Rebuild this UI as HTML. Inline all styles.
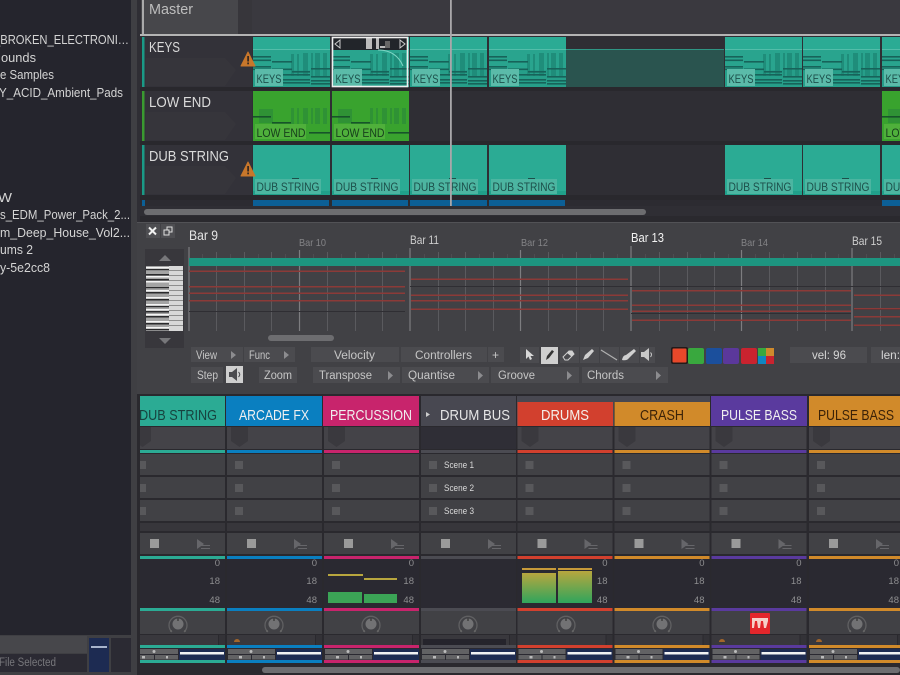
<!DOCTYPE html>
<html><head><meta charset="utf-8"><style>
html,body{margin:0;padding:0;background:#2b2a30;width:900px;height:675px;overflow:hidden}
svg{display:block;font-family:"Liberation Sans",sans-serif;filter:blur(0.35px)}
</style></head><body>
<svg xmlns="http://www.w3.org/2000/svg" width="900" height="675" viewBox="0 0 900 675">
<defs>
<clipPath id="firstcol"><rect x="140" y="394" width="85" height="270"/></clipPath>
<linearGradient id="mg" x1="0" y1="0" x2="0" y2="1"><stop offset="0" stop-color="#b8a63e"/><stop offset="1" stop-color="#2fa55c"/></linearGradient>
<g id="keys">
<rect width="77" height="50" fill="#2bab94"/>
<rect y="12" width="77" height="38" fill="#29a48e"/>
<rect y="12" width="77" height="1" fill="#53bda9"/>
<g fill="#1f8d7a"><rect x="38" y="17" width="3" height="22"/><rect x="44" y="17" width="2" height="22"/><rect x="50" y="16" width="5" height="23"/><rect x="58" y="16" width="2" height="23"/><rect x="62" y="16" width="5" height="23"/><rect x="70" y="16" width="4" height="23"/><rect x="0" y="33" width="77" height="17" opacity=".25"/></g>
<g fill="#17635a"><rect y="19" width="18" height="1.6"/><rect y="22.500" width="18" height="1.6"/><rect y="29" width="18" height="1.6"/><rect y="31.500" width="18" height="1.6"/><rect x="19" y="24" width="20" height="1.6"/><rect x="19" y="31.500" width="20" height="1.6"/><rect x="58" y="31" width="19" height="1.6"/><rect x="39" y="34" width="18" height="1.6"/><rect x="30" y="37" width="27" height="1.6"/><rect x="30" y="42" width="27" height="1.6"/><rect x="30" y="45" width="27" height="1.6"/><rect x="58" y="39" width="19" height="1.6"/><rect x="58" y="43" width="19" height="1.6"/><rect x="58" y="46" width="19" height="1.6"/></g>
<rect x="2" y="32" width="28" height="17" fill="#5bbba9"/>
<text x="3.500" y="46" font-size="12" fill="#1c4f4a" textLength="25" lengthAdjust="spacingAndGlyphs">KEYS</text>
</g>
<g id="low">
<rect width="77" height="50" fill="#39a32e"/>
<g fill="#2f9235"><rect x="38" y="17" width="3" height="16"/><rect x="44" y="17" width="2" height="16"/><rect x="50" y="17" width="5" height="16"/><rect x="58" y="17" width="2" height="16"/><rect x="62" y="17" width="5" height="16"/><rect x="70" y="17" width="4" height="16"/><rect x="6" y="18" width="14" height="14"/></g>
<g fill="#17542a"><rect y="25" width="18" height="1.6"/><rect x="19" y="31" width="19" height="1.6"/><rect x="56" y="41" width="21" height="1.6"/></g>
<rect x="2" y="33" width="51" height="15" fill="#4fb03b"/>
<text x="3.500" y="46" font-size="12" fill="#17401c" textLength="49" lengthAdjust="spacingAndGlyphs">LOW END</text>
</g>
<g id="dub">
<rect width="77" height="50" fill="#2bab94"/>
<rect y="46" width="77" height="4" fill="#20a08a"/>
<rect x="2" y="34" width="66" height="15" fill="#4cb5a1"/>
<rect x="39" y="33" width="7" height="1" fill="#1c4f4a"/>
<text x="3.500" y="46" font-size="12" fill="#1c4f4a" textLength="63" lengthAdjust="spacingAndGlyphs">DUB STRING</text>
</g>
<g id="warn"><path d="M7 0 L14 14 H0Z" fill="#c8772b" stroke="#c8772b" stroke-linejoin="round"/><rect x="6.200" y="4" width="1.800" height="5.500" fill="#3a2a20"/><rect x="6.200" y="10.500" width="1.800" height="1.800" fill="#3a2a20"/></g>
<g id="col">
<rect y="427" width="95" height="22" fill="#444348"/>
<path d="M4 427 H21 V441 L12.500 447 L4 441Z" fill="#3a393e"/>
<rect y="450" width="95" height="3" fill="currentColor"/>
<rect y="454" width="95" height="21" fill="#414145"/><rect y="477" width="95" height="21" fill="#414145"/><rect y="500" width="95" height="21" fill="#414145"/>
<rect x="8" y="461" width="8" height="8" fill="#58585b"/><rect x="8" y="484" width="8" height="8" fill="#58585b"/><rect x="8" y="507" width="8" height="8" fill="#58585b"/>
<rect y="523" width="95" height="8" fill="#37363b"/>
<rect y="533" width="95" height="21" fill="#414145"/>
<rect x="20" y="539" width="9" height="9" fill="#9a9a9a"/>
<path d="M67 539 L74 544 L67 549Z" fill="#66666a"/><rect x="71" y="545" width="9" height="1" fill="#66666a"/><rect x="71" y="548" width="9" height="1" fill="#66666a"/>
<rect y="556" width="95" height="3" fill="currentColor"/>
<rect y="559" width="95" height="49" fill="#2a2931"/>
<rect y="608" width="95" height="3" fill="currentColor"/>
<rect y="611" width="95" height="23" fill="#414145"/>
<rect y="635" width="88" height="10" fill="#39383d"/><rect x="89" y="635" width="6" height="10" fill="#333237"/>
<rect y="645" width="95" height="3" fill="currentColor"/>
<rect y="648" width="95" height="12" fill="#2a2931"/>
<rect x="1" y="649" width="47" height="5" fill="#626264"/><circle cx="24" cy="651.500" r="1.500" fill="#bbb"/>
<rect x="1" y="655" width="23" height="4.500" fill="#626264"/><rect x="25" y="655" width="23" height="4.500" fill="#626264"/>
<rect x="12" y="656" width="3" height="2.500" fill="#bbb"/><rect x="36" y="656" width="2" height="2.500" fill="#bbb"/>
<rect x="49" y="649" width="46" height="11" fill="#1e2c52"/><rect x="50" y="652" width="44" height="2.500" fill="#f2f2f2"/>
<rect y="660" width="95" height="3" fill="currentColor"/>
</g>
<g id="knob"><path d="M-6 8 A9 9 0 1 1 6 8" fill="none" stroke="#606062" stroke-width="1.300"/><circle r="5.500" fill="#727274"/><rect x="-0.600" y="-5.500" width="1.200" height="2.500" fill="#333"/><circle cx="-7" cy="7" r="1" fill="#666"/><circle cx="7" cy="7" r="1" fill="#666"/></g>
<g id="nums" font-size="9.500" fill="#8e8e90" text-anchor="end"><text x="90" y="566">0</text><text x="90" y="584">18</text><text x="90" y="603">48</text></g>
</defs>

<rect width="900" height="675" fill="#2f2e34"/>

<!-- left panel -->
<rect width="131" height="635" fill="#25252d"/>
<rect x="131" width="6" height="675" fill="#3f3f43"/>
<g font-size="13" fill="#d4d4d4">
<text x="-6" y="44" textLength="135" lengthAdjust="spacingAndGlyphs">_BROKEN_ELECTRONI…</text>
<text x="1" y="62" textLength="35" lengthAdjust="spacingAndGlyphs">ounds</text>
<text x="0" y="79" textLength="54" lengthAdjust="spacingAndGlyphs">e Samples</text>
<text x="-1" y="97" textLength="124" lengthAdjust="spacingAndGlyphs">Y_ACID_Ambient_Pads</text>
<text x="-2" y="202" textLength="14" lengthAdjust="spacingAndGlyphs">W</text>
<text x="0" y="219" textLength="130" lengthAdjust="spacingAndGlyphs">s_EDM_Power_Pack_2...</text>
<text x="0" y="237" textLength="130" lengthAdjust="spacingAndGlyphs">m_Deep_House_Vol2...</text>
<text x="0" y="254" textLength="33" lengthAdjust="spacingAndGlyphs">ums 2</text>
<text x="0" y="272" textLength="50" lengthAdjust="spacingAndGlyphs">y-5e2cc8</text>
</g>
<rect y="635" width="131" height="40" fill="#3f3f43"/>
<rect y="636" width="87" height="17" fill="#47474b"/>
<rect y="654" width="87" height="18" fill="#2b2a33"/>
<text x="-1" y="666" font-size="11.500" fill="#77777b" textLength="57" lengthAdjust="spacingAndGlyphs">File Selected</text>
<rect x="89" y="638" width="20" height="34" fill="#1d2b52"/><rect x="91" y="646" width="16" height="2" fill="#a8b4cc"/>
<rect x="111" y="638" width="20" height="34" fill="#2b2a33"/>

<!-- arrange -->
<rect x="252" width="648" height="34" fill="#3a393f"/>
<rect x="141" width="97" height="34" fill="#47474b"/>
<rect x="238" width="14" height="34" fill="#37363b"/>
<rect x="142" width="2" height="34" fill="#aaa"/>
<rect x="140" y="34" width="760" height="2" fill="#b4b4b4"/>
<g fill="#333239">
<rect x="144" y="37" width="108" height="50"/><rect x="144" y="91" width="108" height="50"/><rect x="144" y="145" width="108" height="50"/>
</g>
<g fill="#36353b"><path d="M146 58 H225 L236 70 L225 86 H146Z"/><path d="M146 112 H225 L236 124 L225 140 H146Z"/><path d="M146 166 H225 L236 178 L225 194 H146Z"/></g>
<rect x="142" y="37" width="2.500" height="50" fill="#1a9a86"/><rect x="142" y="91" width="2.500" height="50" fill="#3a9a30"/><rect x="142" y="145" width="2.500" height="50" fill="#1a9a86"/>
<rect x="140" y="87" width="760" height="4" fill="#29282d"/><rect x="140" y="141" width="760" height="4" fill="#29282d"/><rect x="140" y="195" width="760" height="5" fill="#29282d"/>
<rect x="140" y="200" width="760" height="6" fill="#2c2b31"/>
<rect x="142" y="200" width="3" height="6" fill="#0c5f96"/>
<g font-size="14.500" fill="#dadada">
<text x="149" y="14" fill="#bdbdbd" textLength="44" lengthAdjust="spacingAndGlyphs">Master</text>
<text x="149" y="52" textLength="31" lengthAdjust="spacingAndGlyphs">KEYS</text>
<text x="149" y="107" textLength="62" lengthAdjust="spacingAndGlyphs">LOW END</text>
<text x="149" y="161" textLength="80" lengthAdjust="spacingAndGlyphs">DUB STRING</text>
</g>
<use href="#keys" x="253" y="37"/><use href="#keys" x="332" y="37"/><use href="#keys" x="410" y="37"/><use href="#keys" x="489" y="37"/><use href="#keys" x="725" y="37"/><use href="#keys" x="803" y="37"/><use href="#keys" x="882" y="37"/>
<rect x="566" y="49" width="158" height="38" fill="#2a544f"/><rect x="566" y="49" width="158" height="1" fill="#2f9584"/>
<use href="#low" x="253" y="91"/><use href="#low" x="332" y="91"/><use href="#low" x="882" y="91"/>
<use href="#dub" x="253" y="145"/><use href="#dub" x="332" y="145"/><use href="#dub" x="410" y="145"/><use href="#dub" x="489" y="145"/><use href="#dub" x="725" y="145"/><use href="#dub" x="803" y="145"/><use href="#dub" x="882" y="145"/>
<g fill="#0c5f96"><rect x="253" y="200" width="76" height="6"/><rect x="332" y="200" width="76" height="6"/><rect x="410" y="200" width="77" height="6"/><rect x="489" y="200" width="76" height="6"/><rect x="882" y="200" width="18" height="6"/></g>
<!-- selected clip -->
<rect x="333" y="38" width="74" height="12" fill="#22252a"/>
<rect x="366" y="38" width="6" height="11" fill="#bbb"/><rect x="376" y="38" width="3" height="11" fill="#bbb"/><rect x="380" y="46" width="6" height="2" fill="#bbb"/><rect x="385" y="41" width="5" height="7" fill="#666"/>
<path d="M340 40 L335 44 L340 48Z M400 40 L405 44 L400 48Z" fill="none" stroke="#ccc"/>
<path d="M378 50 Q396 50 403 66" fill="none" stroke="#7fd6c5" stroke-width="1"/>
<rect x="332.500" y="37.500" width="75" height="49" fill="none" stroke="#eee" stroke-width="1.600"/>
<use href="#warn" x="241" y="52"/><use href="#warn" x="241" y="162"/>
<rect x="450" y="0" width="1.800" height="206" fill="#a9a7aa"/>
<rect x="144" y="209" width="502" height="6" rx="3" fill="#6d6d70"/>
<rect x="140" y="216" width="760" height="6" fill="#2a292e"/>

<!-- editor -->
<rect x="137" y="222" width="763" height="172" fill="#414145"/>
<rect x="137" y="222" width="763" height="1" fill="#525256"/>
<rect x="146" y="224" width="14" height="14" fill="#4e4e52"/><path d="M149 227.500 L156 234.500 M156 227.500 L149 234.500" stroke="#f0f0f0" stroke-width="2"/>
<rect x="161" y="224" width="14" height="14" fill="#4e4e52"/><rect x="167" y="227" width="5" height="5" fill="none" stroke="#e0e0e0"/><rect x="164" y="230" width="5" height="5" fill="#4e4e52" stroke="#e0e0e0"/>
<g fill="#e6e6e6">
<text x="189" y="240" font-size="14" textLength="29" lengthAdjust="spacingAndGlyphs">Bar 9</text>
<text x="299" y="246" font-size="10.500" fill="#848487" textLength="27" lengthAdjust="spacingAndGlyphs">Bar 10</text>
<text x="410" y="244" font-size="12" fill="#cfcfcf" textLength="29" lengthAdjust="spacingAndGlyphs">Bar 11</text>
<text x="521" y="246" font-size="10.500" fill="#848487" textLength="27" lengthAdjust="spacingAndGlyphs">Bar 12</text>
<text x="631" y="242" font-size="13" fill="#f2f2f2" textLength="33" lengthAdjust="spacingAndGlyphs">Bar 13</text>
<text x="741" y="246" font-size="10.500" fill="#848487" textLength="27" lengthAdjust="spacingAndGlyphs">Bar 14</text>
<text x="852" y="245" font-size="12" fill="#cfcfcf" textLength="30" lengthAdjust="spacingAndGlyphs">Bar 15</text>
</g>
<!-- grid -->
<g stroke="#5a5a5e" stroke-width="1">
<path d="M216.500 252V331M244.500 252V331M271.500 252V331M327.500 252V331M355.500 252V331M382.500 252V331M438.500 252V331M465.500 252V331M493.500 252V331M548.500 252V331M576.500 252V331M603.500 252V331M659.500 252V331M687.500 252V331M714.500 252V331M769.500 252V331M797.500 252V331M825.500 252V331M880.500 252V331"/>
</g>
<g stroke="#4d4d51" stroke-width="1">
<path d="M202.500 254V258M230.500 254V258M258.500 254V258M285.500 254V258M313.500 254V258M341.500 254V258M368.500 254V258M396.500 254V258M424.500 254V258M451.500 254V258M479.500 254V258M507.500 254V258M534.500 254V258M562.500 254V258M590.500 254V258M617.500 254V258M645.500 254V258M673.500 254V258M700.500 254V258M728.500 254V258M755.500 254V258M783.500 254V258M811.500 254V258M838.500 254V258M866.500 254V258M894.500 254V258"/>
</g>
<g stroke="#7d7d80" stroke-width="1.200"><path d="M189 247V331M299.500 250V331M410 248V331M520.500 250V331M631 246V331M741.500 250V331M852 248V331"/></g>
<rect x="189" y="258" width="711" height="8" fill="#1d9580"/>
<g fill="#2f2e33"><rect x="189" y="311" width="216" height="1"/><rect x="410" y="286" width="490" height="1"/><rect x="631" y="313" width="220" height="1"/><rect x="854" y="309" width="46" height="1"/></g>
<g fill="#8c3a38">
<rect x="189" y="270.500" width="216" height="1.500"/><rect x="189" y="286" width="216" height="1.500"/><rect x="189" y="292.500" width="216" height="1.500"/><rect x="189" y="300" width="216" height="1.500"/>
<rect x="411" y="278.500" width="217" height="1.500"/><rect x="411" y="294.500" width="217" height="1.500"/><rect x="411" y="300" width="217" height="1.500"/><rect x="411" y="308.500" width="217" height="1.500"/>
<rect x="632" y="290" width="219" height="1.500"/><rect x="632" y="304.500" width="219" height="1.500"/><rect x="632" y="310.500" width="219" height="1.500"/><rect x="632" y="319.500" width="219" height="1.500"/>
<rect x="854" y="294.500" width="46" height="1.500"/><rect x="854" y="308" width="46" height="1.500"/><rect x="854" y="316" width="46" height="1.500"/><rect x="854" y="324.500" width="46" height="1.500"/>
</g>
<rect x="268" y="335" width="66" height="6" rx="3" fill="#6d6d70"/>
<!-- piano -->
<rect x="145" y="249" width="39" height="99" fill="#38373c"/>
<path d="M159 261 L165 255 L171 261Z" fill="#77777a"/><path d="M159 338 L165 344 L171 338Z" fill="#77777a"/>
<rect x="146" y="266" width="23" height="65" fill="#a4a4a4"/>
<rect x="169" y="266" width="14" height="65" fill="#d8d8d8"/>
<g fill="#8e8e8e"><rect x="169" y="270" width="14" height="1"/><rect x="169" y="275" width="14" height="1"/><rect x="169" y="280" width="14" height="1"/><rect x="169" y="285" width="14" height="1"/><rect x="169" y="290" width="14" height="1"/><rect x="169" y="295" width="14" height="1"/><rect x="169" y="300" width="14" height="1"/><rect x="169" y="305" width="14" height="1"/><rect x="169" y="310" width="14" height="1"/><rect x="169" y="315" width="14" height="1"/><rect x="169" y="320" width="14" height="1"/><rect x="169" y="325" width="14" height="1"/></g>
<g fill="#2a2a2c"><rect x="146" y="269" width="23" height="1.200"/><rect x="146" y="274" width="23" height="1.500"/><rect x="146" y="279" width="23" height="1.500"/><rect x="146" y="287" width="23" height="1.200"/><rect x="146" y="292" width="23" height="1.500"/><rect x="146" y="299" width="23" height="1.500"/><rect x="146" y="306" width="23" height="1.200"/><rect x="146" y="311" width="23" height="1.500"/><rect x="146" y="316" width="23" height="1.500"/><rect x="146" y="323" width="23" height="1.500"/><rect x="146" y="329" width="23" height="1.200"/></g>
<g fill="#f4f4f4"><rect x="146" y="267" width="23" height="1.500"/><rect x="146" y="276" width="23" height="1.500"/><rect x="146" y="281" width="23" height="1.500"/><rect x="146" y="290" width="23" height="1.500"/><rect x="146" y="297" width="23" height="1.500"/><rect x="146" y="304" width="23" height="1.500"/><rect x="146" y="309" width="23" height="1.500"/><rect x="146" y="314" width="23" height="1.500"/><rect x="146" y="321" width="23" height="1.500"/><rect x="146" y="327" width="23" height="1.500"/></g>
<!-- toolbar -->
<g fill="#4b4b4f">
<rect x="191" y="347" width="52" height="15"/><rect x="244" y="347" width="51" height="15"/><rect x="311" y="347" width="88" height="15"/><rect x="401" y="347" width="86" height="15"/><rect x="488" y="347" width="16" height="15"/>
<rect x="191" y="367" width="32" height="16"/><rect x="259" y="367" width="38" height="16"/><rect x="313" y="367" width="87" height="16"/><rect x="402" y="367" width="87" height="16"/><rect x="491" y="367" width="88" height="16"/><rect x="582" y="367" width="86" height="16"/>
<rect x="520" y="347" width="19" height="16"/><rect x="560" y="347" width="19" height="16"/><rect x="580" y="347" width="19" height="16"/><rect x="600" y="347" width="19" height="16"/><rect x="620" y="347" width="19" height="16"/><rect x="640" y="347" width="15" height="16"/>
<rect x="790" y="347" width="77" height="16"/><rect x="871" y="347" width="29" height="16"/>
</g>
<g font-size="11.500" fill="#c6c6c6">
<text x="196" y="359" textLength="21" lengthAdjust="spacingAndGlyphs">View</text>
<text x="249" y="359" textLength="21" lengthAdjust="spacingAndGlyphs">Func</text>
<text x="334" y="359" textLength="41" lengthAdjust="spacingAndGlyphs">Velocity</text>
<text x="415" y="359" textLength="57" lengthAdjust="spacingAndGlyphs">Controllers</text>
<text x="492" y="359" textLength="7" lengthAdjust="spacingAndGlyphs">+</text>
<text x="197" y="379" textLength="21" lengthAdjust="spacingAndGlyphs">Step</text>
<text x="264" y="379" textLength="28" lengthAdjust="spacingAndGlyphs">Zoom</text>
<text x="319" y="379" textLength="53" lengthAdjust="spacingAndGlyphs">Transpose</text>
<text x="408" y="379" textLength="47" lengthAdjust="spacingAndGlyphs">Quantise</text>
<text x="498" y="379" textLength="37" lengthAdjust="spacingAndGlyphs">Groove</text>
<text x="587" y="379" textLength="37" lengthAdjust="spacingAndGlyphs">Chords</text>
<text x="812" y="359" font-size="12" fill="#d6d6d6" textLength="34" lengthAdjust="spacingAndGlyphs">vel: 96</text>
<text x="881" y="359" font-size="12" fill="#d6d6d6" textLength="19" lengthAdjust="spacingAndGlyphs">len:</text>
</g>
<g fill="#8c8c8f"><path d="M231 351 L236 355 L231 359Z M284 351 L289 355 L284 359Z M388 371 L393 375.500 L388 380Z M478 371 L483 375.500 L478 380Z M567 371 L572 375.500 L567 380Z M656 371 L661 375.500 L656 380Z"/></g>
<rect x="226" y="366" width="17" height="17" fill="#cfcfcf"/>
<path d="M229 372 H232 L237 368 V381 L232 377 H229Z" fill="#4a4a4e"/><path d="M238.500 372 Q241 374.500 238.500 377" fill="none" stroke="#4a4a4e"/>
<!-- tools -->
<rect x="541" y="347" width="17" height="17" fill="#cfcfcf"/>
<path d="M526 349 L526 359 L528.500 356.500 L530 360 L532 359 L530.500 356 L534 356Z" fill="#d8d8d8"/>
<path d="M546 360 L547 356 L552 350 L554 351.500 L549 358Z" fill="#333"/>
<path d="M563 357 L569 351 H572 L574 354 L568 360 H565Z" fill="none" stroke="#d0d0d0"/><path d="M567 353 L569 351 H572 L574 354 L571.500 356.500Z" fill="#d0d0d0"/>
<path d="M583 360 L585 355 L592 349 L594 351 L588 358Z" fill="#d0d0d0"/>
<path d="M601 350 L617 360" stroke="#b0b0b0" stroke-width="1.200"/>
<path d="M622 360 Q623 355 626 355 L634 349 L636 351 L629 358 Q627 361 622 360Z" fill="#d0d0d0"/>
<path d="M641 352 H644 L649 348 V361 L644 357 H641Z" fill="#c8c8c8"/><path d="M650.500 352.500 Q652.500 354.500 650.500 357" fill="none" stroke="#c8c8c8"/>
<!-- colours -->
<rect x="671" y="347" width="17" height="17" rx="2" fill="#221a1a"/>
<rect x="672.500" y="348.500" width="14" height="14" rx="1" fill="#e8482a"/>
<rect x="688" y="348" width="16" height="16" rx="2" fill="#39a83e"/>
<rect x="706" y="348" width="16" height="16" rx="2" fill="#1b4f9c"/>
<rect x="723" y="348" width="16" height="16" rx="2" fill="#5b389b"/>
<rect x="741" y="348" width="16" height="16" rx="2" fill="#c9232f"/>
<rect x="758" y="348" width="8" height="8" fill="#39a83e"/><rect x="766" y="348" width="8" height="8" fill="#cf8a2c"/><rect x="758" y="356" width="8" height="8" fill="#0f86c2"/><rect x="766" y="356" width="8" height="8" fill="#c9232f"/>

<!-- mixer -->
<rect x="137" y="394" width="763" height="270" fill="#2a292e"/>
<g style="color:#2bab94" clip-path="url(#firstcol)"><use href="#col" x="130"/></g>
<g style="color:#0a7fc0"><use href="#col" x="227"/></g>
<g style="color:#c8246c"><use href="#col" x="324"/></g>
<g style="color:#4b4b52"><use href="#col" x="421"/></g>
<g style="color:#d2402e"><use href="#col" x="517.500"/></g>
<g style="color:#d18a2a"><use href="#col" x="614.500"/></g>
<g style="color:#5a3a9e"><use href="#col" x="711.500"/></g>
<g style="color:#d18a2a"><use href="#col" x="809"/></g>
<!-- drum bus overrides -->
<rect x="421" y="427" width="95" height="22" fill="#2f2e36"/>
<rect x="421" y="559" width="95" height="49" fill="#2b2a32"/>
<rect x="423" y="639" width="83" height="6" fill="#25242c"/>
<!-- headers -->
<rect x="140" y="396" width="85" height="30" fill="#2bab94"/>
<rect x="226" y="396" width="96" height="30" fill="#0a7fc0"/>
<rect x="323" y="396" width="96" height="30" fill="#c8246c"/>
<rect x="421" y="396" width="95" height="30" fill="#484851"/>
<rect x="517" y="396" width="97" height="30" fill="#484851"/>
<rect x="517.500" y="402" width="95.500" height="24" fill="#d2402e"/>
<rect x="614" y="396" width="96" height="6" fill="#484851"/>
<rect x="614.500" y="402" width="95.500" height="24" fill="#d18a2a"/>
<rect x="711" y="396" width="96" height="30" fill="#5a3a9e"/>
<rect x="809" y="396" width="91" height="30" fill="#d18a2a"/>
<g font-size="15">
<text x="139" y="420" fill="#17433f" textLength="78" lengthAdjust="spacingAndGlyphs">DUB STRING</text>
<text x="239" y="420" fill="#f0f0f0" textLength="70" lengthAdjust="spacingAndGlyphs">ARCADE FX</text>
<text x="330" y="420" fill="#f0f0f0" textLength="82" lengthAdjust="spacingAndGlyphs">PERCUSSION</text>
<text x="440" y="420" fill="#e6e6e6" textLength="70" lengthAdjust="spacingAndGlyphs">DRUM BUS</text>
<text x="541" y="420" fill="#f4f0ec" textLength="48" lengthAdjust="spacingAndGlyphs">DRUMS</text>
<text x="640" y="420" fill="#3b2208" textLength="44" lengthAdjust="spacingAndGlyphs">CRASH</text>
<text x="721" y="420" fill="#f0f0f0" textLength="76" lengthAdjust="spacingAndGlyphs">PULSE BASS</text>
<text x="818" y="420" fill="#3b2208" textLength="76" lengthAdjust="spacingAndGlyphs">PULSE BASS</text>
</g>
<rect x="131" y="394" width="6" height="281" fill="#3f3f43"/>
<rect x="137" y="394" width="3" height="270" fill="#2a292e"/>
<path d="M426 412 L430 414.500 L426 417Z" fill="#ccc"/>
<g font-size="9.500" fill="#dadada">
<text x="444" y="468" textLength="30" lengthAdjust="spacingAndGlyphs">Scene 1</text>
<text x="444" y="491" textLength="30" lengthAdjust="spacingAndGlyphs">Scene 2</text>
<text x="444" y="514" textLength="30" lengthAdjust="spacingAndGlyphs">Scene 3</text>
</g>
<use href="#nums" x="130"/><use href="#nums" x="227"/><use href="#nums" x="324"/><use href="#nums" x="517.500"/><use href="#nums" x="614.500"/><use href="#nums" x="711.500"/><use href="#nums" x="809"/>
<!-- knobs -->
<use href="#knob" x="178" y="624"/><use href="#knob" x="274" y="624"/><use href="#knob" x="371" y="624"/><use href="#knob" x="468" y="624"/><use href="#knob" x="566" y="624"/><use href="#knob" x="662" y="624"/><use href="#knob" x="857" y="624"/>
<rect x="750" y="613" width="20" height="21" rx="1" fill="#e3262b"/>
<path d="M752 618 H768 V621 L766 628 H764 L763 621 H761 L760 628 H758 L757 621 H755 L754 628 H752Z" fill="#f6d0c8"/>
<g fill="#a4662a"><circle cx="237" cy="642" r="3"/><circle cx="722" cy="642" r="3"/><circle cx="819" cy="642" r="3"/></g>
<g fill="#39383d"><rect x="234" y="642" width="6" height="3"/><rect x="719" y="642" width="6" height="3"/><rect x="816" y="642" width="6" height="3"/></g>
<!-- meters -->
<rect x="328" y="574" width="35" height="2" fill="#b8a63e"/><rect x="364" y="578" width="33" height="2" fill="#b8a63e"/>
<rect x="328" y="592" width="34" height="11" fill="#3ba456"/><rect x="364" y="594" width="33" height="9" fill="#3ba456"/>
<rect x="522" y="568" width="34" height="2" fill="#c79a3a"/><rect x="558" y="568" width="34" height="2" fill="#c79a3a"/>
<rect x="522" y="573" width="34" height="30" fill="url(#mg)"/><rect x="558" y="571" width="34" height="32" fill="url(#mg)"/>
<!-- bottom scrollbar -->
<rect x="137" y="664" width="763" height="11" fill="#2a292e"/>
<rect x="262" y="667" width="638" height="6" rx="3" fill="#6d6d70"/>
</svg>
</body></html>
